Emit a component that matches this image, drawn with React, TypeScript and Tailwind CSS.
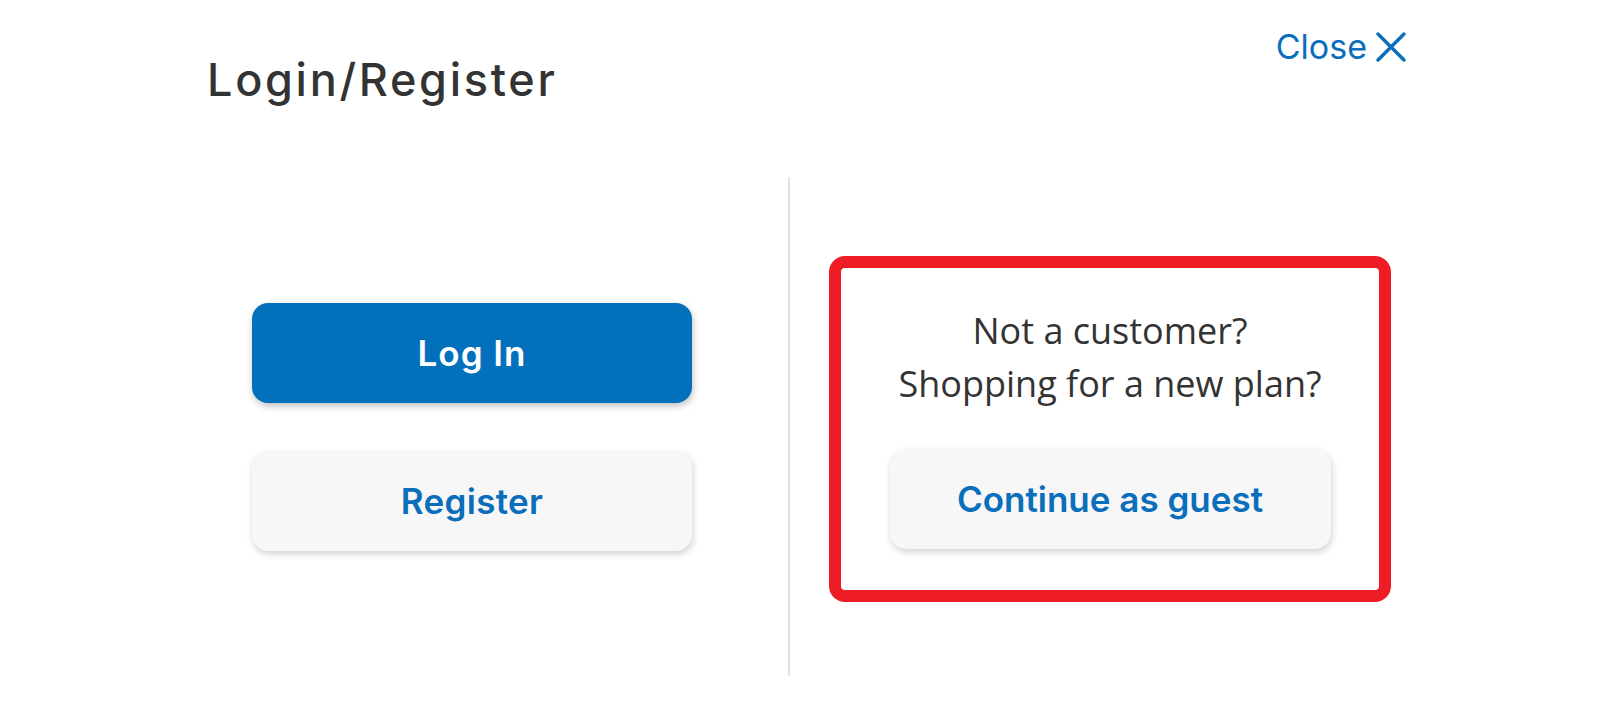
import React from "react";

const blue = "text-[#0a6eba]";

const CloseIcon = () => (
  <svg width="30" height="30" viewBox="0 0 30 30" className="text-[#0a6eba]">
    <path d="M2 2 L28 28 M28 2 L2 28" stroke="currentColor" strokeWidth="3.4" strokeLinecap="round" fill="none" />
  </svg>
);

const GrayButton = ({ label, className = "" }: { label: string; className?: string }) => (
  <button
    className={`h-[100px] rounded-[16px] bg-[#f7f7f7] shadow-[1px_3px_7px_rgba(0,0,0,0.18)] text-[35px] font-semibold ${blue} ${className}`}
  >
    {label}
  </button>
);

export default function App() {
  return (
    <div className="w-full h-[728px] bg-white font-['Inter',sans-serif] overflow-hidden">
      {/* header */}
      <div className="h-[177px] flex justify-between items-start pl-[207px] pr-[194px]">
        <h1 className="mt-[57px] text-[45px] leading-none font-medium text-[#333333] tracking-[2.7px]">
          Login/Register
        </h1>
        <button className="mt-[30px] flex items-center gap-[9px]">
          <span className={`text-[34px] leading-none ${blue}`}>Close</span>
          <CloseIcon />
        </button>
      </div>

      {/* body */}
      <div className="h-[499px] flex">
        <div className="w-[788px] pl-[252px] pt-[126px] flex flex-col gap-[48px]">
          <button className="w-[440px] h-[100px] rounded-[16px] bg-[#0370bc] shadow-[1px_3px_7px_rgba(0,0,0,0.25)] text-[35px] font-semibold tracking-[1px] text-white">
            Log In
          </button>
          <GrayButton label="Register" className="w-[440px] tracking-[0.3px]" />
        </div>

        <div className="w-[2px] h-full bg-[#e2e2e2]" />

        <div className="pl-[39px] pt-[79px]">
          <div className="w-[562px] h-[346px] border-[12px] border-[#ee1c25] rounded-[16px] flex flex-col items-center pt-[36px]">
            <p className="font-['Open_Sans',sans-serif] text-[36px] leading-[53px] text-[#333333] text-center">
              Not a customer?
              <br />
              Shopping for a new plan?
            </p>
            <GrayButton label="Continue as guest" className="w-[441px] mt-[39px]" />
          </div>
        </div>
      </div>
    </div>
  );
}
